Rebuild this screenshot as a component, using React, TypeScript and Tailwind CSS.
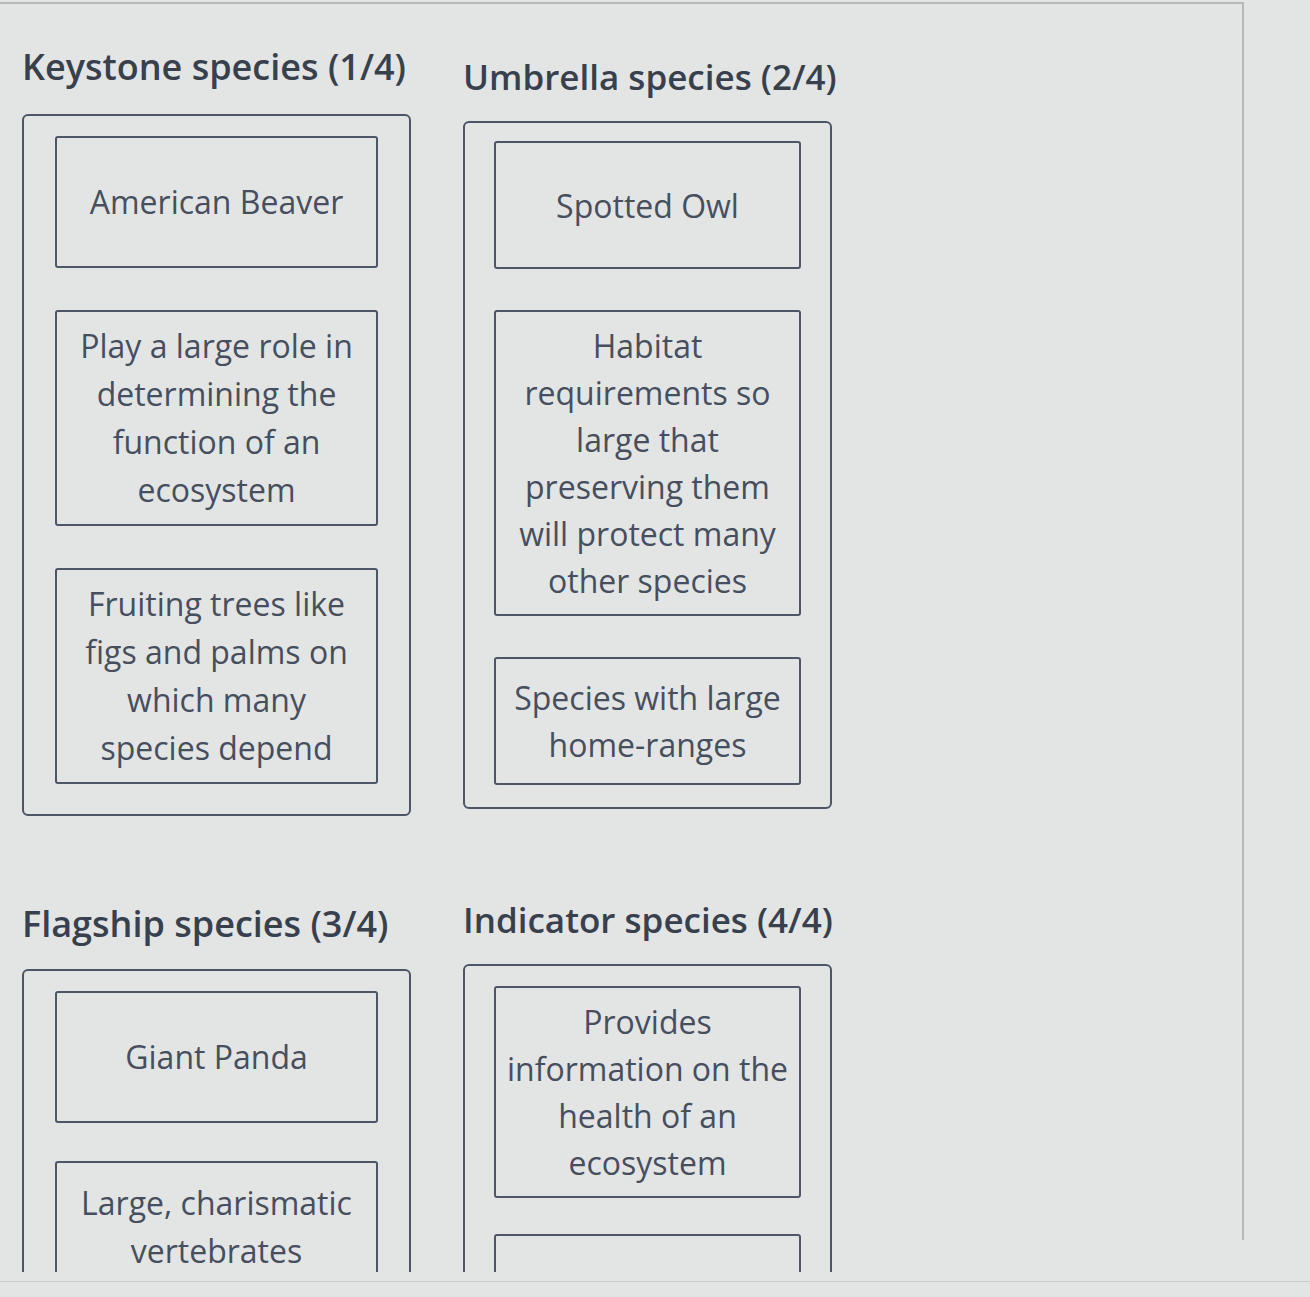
const Card = ({ children, wide }: { children?: React.ReactNode; wide?: boolean }) => {
  return (
    <div
      className={
        wide
          ? "flex min-h-[132px] items-center justify-center rounded-[3px] border-2 border-[#4e5566] px-[15px] py-[10px] text-center text-[32px] leading-[48px] text-[#474e5e]"
          : "flex min-h-[128px] items-center justify-center rounded-[3px] border-2 border-[#4e5566] px-2 py-[10px] text-center text-[32px] leading-[47px] text-[#474e5e]"
      }
    >
      <span>{children}</span>
    </div>
  );
};

const App = () => {
  return (
    <div className="relative h-[1297px] w-[1310px] overflow-hidden bg-[#e2e5e4] font-['Open_Sans',sans-serif]">
      {/* scroll area, content cut off at the bottom */}
      <div className="h-[1272px] overflow-hidden">
        <div className="mt-[2px] h-[1238px] w-[1244px] border-t-2 border-r-2 border-[#b4b8ba] pl-[22px] pt-[39px]">
          <div className="grid grid-cols-[389px_369px] gap-x-[52px]">
            {/* Keystone */}
            <div className="flex flex-col">
              <h2 className="whitespace-nowrap text-[36px] font-semibold leading-[48px] text-[#39404d]">Keystone species (1/4)</h2>
              <div className="mt-[23px] flex flex-col gap-[42px] rounded-[6px] border-2 border-[#4e5566] px-[31px] pb-[30px] pt-[20px]">
                <Card wide>American Beaver</Card>
                <Card wide>
                  Play a large role in determining the function of an ecosystem
                </Card>
                <Card wide>
                  Fruiting trees like figs and palms on which many species depend
                </Card>
              </div>
            </div>

            {/* Umbrella */}
            <div className="flex flex-col pt-[10px]">
              <h2 className="whitespace-nowrap text-[35px] font-semibold leading-[48px] text-[#39404d]">Umbrella species (2/4)</h2>
              <div className="mt-[20px] flex flex-col gap-[41px] rounded-[6px] border-2 border-[#4e5566] px-[29px] pb-[22px] pt-[18px]">
                <Card>Spotted Owl</Card>
                <Card>
                  Habitat requirements so large that preserving them will protect many other species
                </Card>
                <Card>Species with large home-ranges</Card>
              </div>
            </div>

            {/* Flagship */}
            <div className="mt-[84px] flex flex-col">
              <h2 className="whitespace-nowrap text-[36px] font-semibold leading-[48px] text-[#39404d]">Flagship species (3/4)</h2>
              <div className="mt-[21px] flex flex-col gap-[38px] rounded-[6px] border-2 border-[#4e5566] px-[31px] pb-[30px] pt-[20px]">
                <Card wide>Giant Panda</Card>
                <Card wide>Large, charismatic vertebrates</Card>
              </div>
            </div>

            {/* Indicator */}
            <div className="mt-[80px] flex flex-col">
              <h2 className="whitespace-nowrap text-[35px] font-semibold leading-[48px] text-[#39404d]">Indicator species (4/4)</h2>
              <div className="mt-[20px] flex flex-col gap-[36px] rounded-[6px] border-2 border-[#4e5566] px-[29px] pb-[22px] pt-[20px]">
                <Card>Provides information on the health of an ecosystem</Card>
                <Card />
              </div>
            </div>
          </div>
        </div>
      </div>
      <div className="mt-[9px] border-t border-[#c6cacb]" />
    </div>
  );
};

export default App;
